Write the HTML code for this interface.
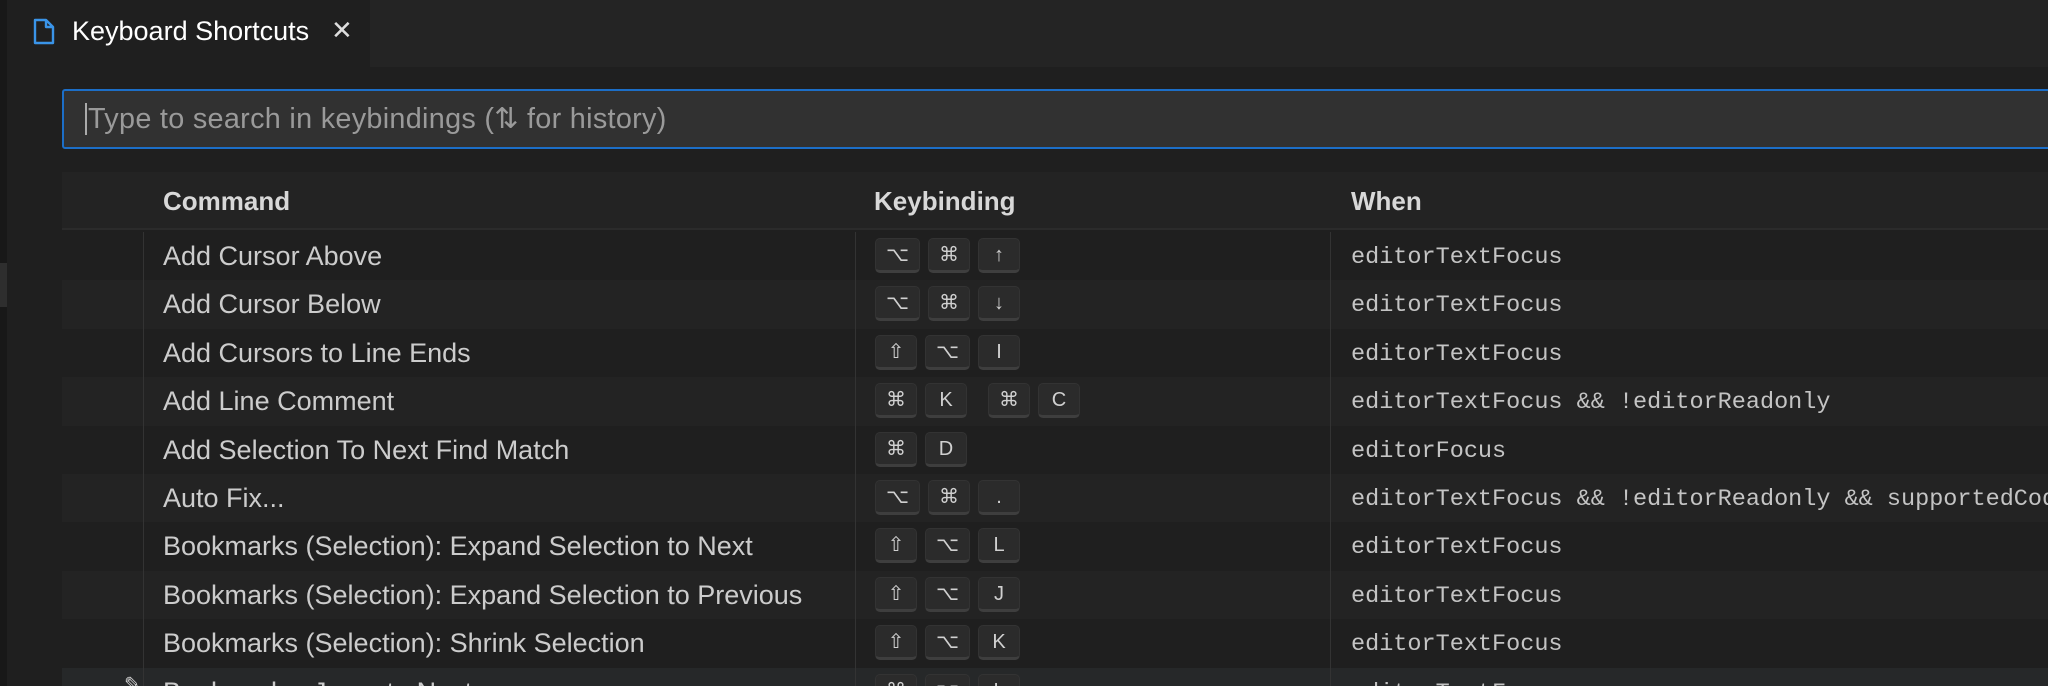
<!DOCTYPE html>
<html><head><meta charset="utf-8"><style>
*{margin:0;padding:0;box-sizing:border-box}
html{width:2048px;height:686px;overflow:hidden}
body{width:2048px;height:686px;overflow:hidden;background:#1f1f1f;font-family:"Liberation Sans",sans-serif;color:#cccccc;position:relative}
.strip{position:absolute;left:0;top:0;width:7px;height:686px;background:#181818}
.strip i{position:absolute;left:0;top:263px;width:7px;height:44px;background:#2e2e2e}
.tabbar{position:absolute;left:7px;top:0;right:0;height:67px;background:#242424}
.tab{position:absolute;left:7px;top:0;width:363px;height:67px;background:#1f1f1f}
.tab .t{position:absolute;left:65px;top:16px;font-size:27px;color:#fff}
.tab .x{position:absolute;left:324px;top:15px;font-size:26px;color:#ddd}
.search{position:absolute;left:62px;top:89px;width:2000px;height:60px;border:2px solid #1c6ec7;border-radius:3px;background:#313131}
.search .p{position:absolute;left:21px;top:12px;font-size:28.8px;letter-spacing:0.3px;color:#9a9a9a;border-left:2px solid #aaa;padding-left:1px;line-height:32px}
.hdr{position:absolute;left:62px;top:172px;width:1990px;height:58px;background:#232323;border-bottom:2px solid #2b2b2b}
.hdr b{position:absolute;top:14px;font-size:26px;color:#d8d8d8}
.row{position:absolute;left:62px;width:1990px;height:48.4px;overflow:hidden}
.row.l{background:#232323}
.row.h{background:#262829}
.row .c{position:absolute;left:101px;top:9px;font-size:27px;white-space:nowrap}
.row .w{position:absolute;left:1289px;top:12px;font-family:"Liberation Mono","DejaVu Sans Mono",monospace;font-size:23.5px;white-space:nowrap;color:#c4c4c4}
.keys{position:absolute;left:813px;top:6px;display:flex}
.k{height:35px;min-width:42px;padding:0 10px;margin-right:8px;background:#2b2b2b;border:1px solid #333;border-bottom:3px solid #3e3e3e;border-radius:5px;font-size:20px;line-height:33px;text-align:center;color:#d0d0d0}
.sp{width:13px}
.vl{position:absolute;top:232px;height:454px;width:1px;background:#333}
</style></head><body>
<div class="strip"><i></i></div>
<div class="tabbar"></div>
<div class="tab">
<svg style="position:absolute;left:25px;top:18px" width="24" height="28" viewBox="0 0 24 28"><path d="M3 2h11l7 7v16H3z M14 2v7h7" fill="none" stroke="#3a94e8" stroke-width="2.4" stroke-linejoin="round"/></svg>
<span class="t">Keyboard Shortcuts</span><span class="x">✕</span></div>
<div class="search"><span class="p">Type to search in keybindings (⇅ for history)</span></div>
<div class="hdr"><b style="left:101px">Command</b><b style="left:812px">Keybinding</b><b style="left:1289px">When</b></div>

<div class="row" style="top:232px"><span class="c">Add Cursor Above</span><div class="keys"><span class="k">⌥</span><span class="k">⌘</span><span class="k">↑</span></div><span class="w">editorTextFocus</span></div>
<div class="row l" style="top:280.4px"><span class="c">Add Cursor Below</span><div class="keys"><span class="k">⌥</span><span class="k">⌘</span><span class="k">↓</span></div><span class="w">editorTextFocus</span></div>
<div class="row" style="top:328.8px"><span class="c">Add Cursors to Line Ends</span><div class="keys"><span class="k">⇧</span><span class="k">⌥</span><span class="k">I</span></div><span class="w">editorTextFocus</span></div>
<div class="row l" style="top:377.2px"><span class="c">Add Line Comment</span><div class="keys"><span class="k">⌘</span><span class="k">K</span><span class="sp"></span><span class="k">⌘</span><span class="k">C</span></div><span class="w">editorTextFocus &amp;&amp; !editorReadonly</span></div>
<div class="row" style="top:425.6px"><span class="c">Add Selection To Next Find Match</span><div class="keys"><span class="k">⌘</span><span class="k">D</span></div><span class="w">editorFocus</span></div>
<div class="row l" style="top:474px"><span class="c">Auto Fix...</span><div class="keys"><span class="k">⌥</span><span class="k">⌘</span><span class="k">.</span></div><span class="w">editorTextFocus &amp;&amp; !editorReadonly &amp;&amp; supportedCodeAction</span></div>
<div class="row" style="top:522.4px"><span class="c">Bookmarks (Selection): Expand Selection to Next</span><div class="keys"><span class="k">⇧</span><span class="k">⌥</span><span class="k">L</span></div><span class="w">editorTextFocus</span></div>
<div class="row l" style="top:570.8px"><span class="c">Bookmarks (Selection): Expand Selection to Previous</span><div class="keys"><span class="k">⇧</span><span class="k">⌥</span><span class="k">J</span></div><span class="w">editorTextFocus</span></div>
<div class="row" style="top:619.2px"><span class="c">Bookmarks (Selection): Shrink Selection</span><div class="keys"><span class="k">⇧</span><span class="k">⌥</span><span class="k">K</span></div><span class="w">editorTextFocus</span></div>
<div class="row h" style="top:667.6px;height:18.4px"><span style="position:absolute;left:62px;top:4px;font-size:20px;color:#ccc">✎</span><span class="c">Bookmarks: Jump to Next</span><div class="keys"><span class="k">⌘</span><span class="k">⌥</span><span class="k">L</span></div><span class="w">editorTextFocus</span></div>

<div class="vl" style="left:143px"></div>
<div class="vl" style="left:855px"></div>
<div class="vl" style="left:1330px"></div>
</body></html>
